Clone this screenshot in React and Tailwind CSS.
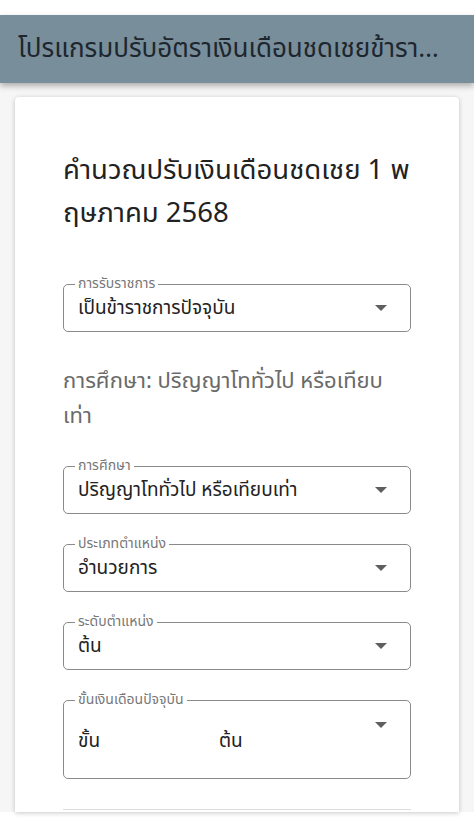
import React from "react";

const font = { fontFamily: '"Noto Sans Thai", "Noto Sans", "Open Sans", sans-serif' };

function Arrow() {
  return (
    <svg width="12" height="7" viewBox="0 0 12 7" className="shrink-0">
      <path d="M0 0 L12 0 L6 6 Z" fill="#5f5f5f" />
    </svg>
  );
}

function SelectBox({ label, tall, children }) {
  return (
    <div
      className={`relative border border-[#8a8a8a] rounded-[5px] pl-[14px] pr-[23px] flex justify-between ${
        tall ? "h-[79px] items-start" : "h-[48px] items-center"
      }`}
    >
      <span className="absolute -top-[9px] left-[11px] bg-white px-[3px] text-[14px] leading-[16px] text-[#777777] whitespace-nowrap">
        {label}
      </span>
      <div className={`text-[19px] leading-[24px] text-[#222] whitespace-nowrap ${tall ? "pt-[29px]" : "pt-[1px]"}`}>
        {children}
      </div>
      <div className={tall ? "pt-[21px]" : ""}>
        <Arrow />
      </div>
    </div>
  );
}

export default function App() {
  return (
    <div className="min-h-[821px] bg-white" style={font}>
      <div className="h-[15px] bg-white"></div>
      {/* Header */}
      <header className="h-[68px] bg-[#788e9a] flex items-center pl-[18px] pr-[26px] shadow-[0_3px_6px_rgba(0,0,0,0.3)] relative z-10">
        <h1 className="min-w-0 text-[26px] text-[#1d262e] whitespace-nowrap overflow-hidden text-ellipsis">
          โปรแกรมปรับอัตราเงินเดือนชดเชยข้าราชการ
        </h1>
      </header>

      <div className="bg-[#f6f6f6] px-[15px] pt-[14px]">
        <div className="bg-white rounded-t-[4px] shadow-[0_1px_5px_rgba(0,0,0,0.22)] px-[48px] pt-[52px] h-[715px]">
          <h2 className="text-[27.5px] leading-[43px] text-[#222] whitespace-nowrap">
            คำนวณปรับเงินเดือนชดเชย 1 พ
            <br />
            ฤษภาคม 2568
          </h2>

          <div className="mt-[49px]">
            <SelectBox label="การรับราชการ">เป็นข้าราชการปัจจุบัน</SelectBox>
          </div>

          <p className="mt-[32px] text-[22px] leading-[35px] text-[#6a6a6a] whitespace-nowrap">
            การศึกษา: ปริญญาโททั่วไป หรือเทียบ
            <br />
            เท่า
          </p>

          <div className="mt-[32px] flex flex-col gap-[30px]">
            <SelectBox label="การศึกษา">ปริญญาโททั่วไป หรือเทียบเท่า</SelectBox>
            <SelectBox label="ประเภทตำแหน่ง">อำนวยการ</SelectBox>
            <SelectBox label="ระดับตำแหน่ง">ต้น</SelectBox>
            <SelectBox label="ขั้นเงินเดือนปัจจุบัน" tall>
              <span className="inline-block w-[141px]">ขั้น</span>
              <span>ต้น</span>
            </SelectBox>
          </div>

          <div className="mt-[30px] border-t border-[#dddddd]"></div>
        </div>
      </div>
    </div>
  );
}
